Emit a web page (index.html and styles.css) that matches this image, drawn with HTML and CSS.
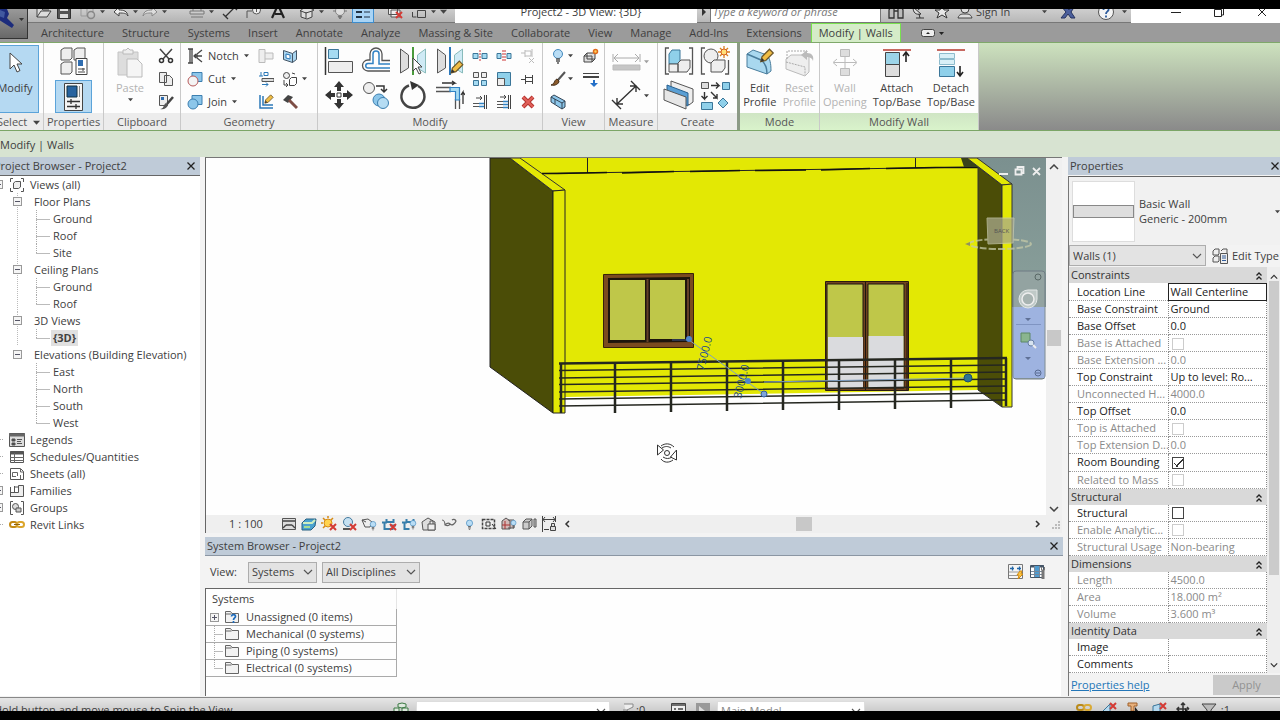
FILE: index.html
```html
<!DOCTYPE html>
<html lang="en">
<head>
<meta charset="utf-8">
<title>Project2 - 3D View: {3D}</title>
<link rel="stylesheet" href="styles.css">
</head>
<body>
<svg class="defs" aria-hidden="true">
  <symbol id="x-red" viewBox="0 0 8 8"><path d="M1 1l6 6M7 1L1 7" stroke="#d43a34" stroke-width="2" fill="none"/></symbol>
  <symbol id="bulb" viewBox="0 0 16 16"><circle cx="8" cy="6" r="4.500" fill="#b9ddf5" stroke="#4389bd"/><path d="M6 11h4M6 13h4M7 15h2" stroke="#555" stroke-width="1.300"/></symbol>
  <symbol id="pencil" viewBox="0 0 12 12"><path d="M1 11l1-4 6-6 3 3-6 6z" fill="#f0bd45" stroke="#6d5627"/><path d="M1 11l1-3 2 2z" fill="#333"/></symbol>
  <symbol id="drop" viewBox="0 0 6 6"><path d="M0 1.500h6L3 5z" fill="#444"/></symbol>
  <symbol id="folder" viewBox="0 0 16 14"><path d="M1.500 12.500v-11h5l1.500 2h6.500v9z" fill="#f2f2f2" stroke="#666"/><path d="M1.500 4h6" stroke="#666"/></symbol>
  <symbol id="chev" viewBox="0 0 10 6"><path d="M1 1l4 4 4-4" fill="none" stroke="#555" stroke-width="1.200"/></symbol>
  <symbol id="collapse" viewBox="0 0 8 10"><path d="M1.500 4.500L4 2l2.500 2.500M1.500 8.500L4 6l2.500 2.500" fill="none" stroke="#222" stroke-width="1.300"/></symbol>
  <symbol id="close" viewBox="0 0 8 8"><path d="M.5.5l7 7M7.500.5l-7 7" fill="none" stroke="#222" stroke-width="1.300"/></symbol>
</svg>
<div class="letterbox">
<div class="app">
<header class="top">
  <button class="logo" aria-label="Application menu"><svg width="36" height="29" viewBox="0 0 36 29"><path d="M6 0h9l2 5-2 4 7 7-2 3-8-5-5-3z" fill="#1c2c7c"/><path d="M8 1l5 2-1 6-5-2z" fill="#41599f"/><path d="M27 9h5l-2.500 3z" fill="#333"/></svg></button>
  <div class="top-rows">
    <div class="titlebar">
      <div class="qat">
        <button aria-label="Open"><svg width="16" height="16" viewBox="0 0 16 16"><path d="M1 13V4h4l2 2h6M1 13l4-6h10l-4 6z" fill="#ddd" stroke="#444"/></svg></button>
        <button aria-label="Save"><svg width="16" height="16" viewBox="0 0 16 16"><path d="M1.500 1.500h13v13h-13z" fill="#555" stroke="#333"/><path d="M4 2h8v5H4zM4 10h8v4H4z" fill="#ddd"/></svg></button>
        <button class="ml2" aria-label="Sync"><svg width="16" height="16" viewBox="0 0 16 16"><path d="M1 12V4h6v8zM7 2h6v7" fill="none" stroke="#999"/><circle cx="11" cy="11" r="3.500" fill="none" stroke="#888" stroke-width="1.500"/></svg></button>
        <svg class="dd" width="5" height="5"><use href="#drop"/></svg>
        <button class="ml2" aria-label="Undo"><svg width="16" height="16" viewBox="0 0 16 16"><path d="M1 8l5-5v3c5 0 8 1 9 6-2-3-4-3-9-3v3z" fill="#eee" stroke="#444"/></svg></button>
        <svg class="dd" width="5" height="5"><use href="#drop"/></svg>
        <button aria-label="Redo"><svg width="16" height="16" viewBox="0 0 16 16"><path d="M15 8l-5-5v3c-5 0-8 1-9 6 2-3 4-3 9-3v3z" fill="#ddd" stroke="#888"/></svg></button>
        <svg class="dd" width="5" height="5"><use href="#drop"/></svg>
        <button class="ml3" aria-label="Print"><svg width="16" height="16" viewBox="0 0 16 16"><path d="M4 7V1h8v6M1 7h14v3H1zM2 13h12" fill="#ccc" stroke="#777"/></svg></button>
        <svg class="dd" width="5" height="5"><use href="#drop"/></svg>
        <button class="ml2" aria-label="Measure"><svg width="16" height="16" viewBox="0 0 16 16"><path d="M3 13L13 3M1 10l5 5M10 1l5 5" stroke="#333" stroke-width="1.300" fill="none"/></svg></button>
        <button class="ml2" aria-label="Tag"><svg width="16" height="16" viewBox="0 0 16 16"><circle cx="10.500" cy="6" r="4" fill="#eee" stroke="#555"/><path d="M10.500 4v4M1 14v-7h5" stroke="#555" fill="none"/></svg></button>
        <button class="ml2" aria-label="Text"><svg width="16" height="16" viewBox="0 0 16 16"><path d="M2 14L8 1l6 13M5 10h7" fill="none" stroke="#222" stroke-width="2.200"/></svg></button>
        <button class="ml" aria-label="3D view"><svg width="16" height="16" viewBox="0 0 16 16"><path d="M1 7l6-5 8 4-2 1v6l-5 2-6-2V7z" fill="#ddd" stroke="#444"/><path d="M7 8v6M2 7l5 2 6-2" stroke="#444" fill="none"/></svg></button>
        <svg class="dd" width="5" height="5"><use href="#drop"/></svg>
        <button class="ml2" aria-label="Section"><svg width="16" height="16" viewBox="0 0 16 16"><circle cx="8" cy="7" r="4.500" fill="#ddd" stroke="#888"/><path d="M1 7h3M12 7h3M6 12h4l-2 3z" fill="#777" stroke="#777"/></svg></button>
        <button class="pressed" aria-label="Thin lines"><svg width="18" height="16" viewBox="0 0 18 16"><path d="M2 4h6M2 8h6M2 13h6" stroke="#234" stroke-width="2"/><path d="M10 4h6M10 8h6M10 13h6" stroke="#234"/></svg></button>
        <button class="ml" aria-label="Close hidden"><svg width="16" height="16" viewBox="0 0 16 16"><path d="M1.500 2.500h9v8h-9zM4 6h9v7H4z" fill="#eee" stroke="#555"/><use href="#x-red" x="8" y="7" width="8" height="8"/></svg></button>
        <button class="ml2" aria-label="Switch windows"><svg width="16" height="16" viewBox="0 0 16 16"><path d="M1 5V2h6M6.500 6.500h8v7h-8zM1.500 8v5h4" fill="none" stroke="#444"/></svg></button>
        <svg class="dd" width="5" height="5"><use href="#drop"/></svg>
        <svg class="dd" width="7" height="7"><use href="#drop"/></svg>
      </div>
      <div class="doc-title">Project2 - 3D View: {3D}</div>
      <div class="infocenter">
        <svg width="8" height="8" viewBox="0 0 8 8"><path d="M2 0l4 4-4 4z" fill="#333"/></svg>
        <input type="text" aria-label="Search" placeholder="Type a keyword or phrase">
        <svg width="16" height="16" viewBox="0 0 16 16"><path d="M1 14V6l2-4h3v12zM10 14V2h3l2 4v8zM6 7h4" fill="#bbb" stroke="#333" stroke-width="1.300"/></svg>
        <svg width="16" height="16" viewBox="0 0 16 16"><path d="M2 3c0 6 3 8 8 7zM5 14h8M8 10l1 4M7 6l5-4" fill="#ddd" stroke="#333"/></svg>
        <svg width="16" height="16" viewBox="0 0 16 16"><path d="M8 1l2 5h5l-4 3 2 5-5-3-5 3 2-5-4-3h5z" fill="#e8e8e8" stroke="#333"/></svg>
        <svg width="16" height="16" viewBox="0 0 16 16"><circle cx="8" cy="5" r="4" fill="#ddd" stroke="#444"/><path d="M1 14c1-4 4-4 7-4s6 0 7 4z" fill="#ddd" stroke="#444"/></svg>
        <span class="signin">Sign In</span>
        <svg width="5" height="5"><use href="#drop"/></svg>
        <svg class="exch" width="16" height="16" viewBox="0 0 16 16"><path d="M1 2h5l3 4 2-4h4l-4 6 4 6h-4l-3-4-3 4H1l5-6z" fill="#4b5f9d" stroke="#26335e"/></svg>
        <svg class="help" width="18" height="18" viewBox="0 0 18 18"><circle cx="9" cy="9" r="7.500" fill="#f4f4f4" stroke="#555"/><path d="M6.500 7c0-4 5.500-3 5 0-.3 1.500-2.500 1.500-2.500 4M9 12.500v2" fill="none" stroke="#2d5b9c" stroke-width="1.800"/></svg>
        <svg width="5" height="5"><use href="#drop"/></svg>
      </div>
      <div class="win">
        <button aria-label="Minimize"><svg width="10" height="10" viewBox="0 0 10 10"><path d="M0 5.500h10" stroke="#222"/></svg></button>
        <button aria-label="Restore"><svg width="10" height="10" viewBox="0 0 10 10"><path d="M.5 2.500h7v7h-7zM3 2V.5h6.500V8H8" fill="none" stroke="#222"/></svg></button>
        <button aria-label="Close"><svg width="10" height="10" viewBox="0 0 10 10"><path d="M1 1l8 8M9 1L1 9" stroke="#222"/></svg></button>
      </div>
    </div>
    <nav class="tabs">
      <button>Architecture</button><button>Structure</button><button>Systems</button><button>Insert</button><button>Annotate</button><button>Analyze</button><button>Massing &amp; Site</button><button>Collaborate</button><button>View</button><button>Manage</button><button>Add-Ins</button><button>Extensions</button><button class="active">Modify | Walls</button>
      <svg width="24" height="10" viewBox="0 0 24 10"><rect x=".5" y="1.500" width="13" height="7" rx="2" fill="#eee" stroke="#444"/><path d="M5 6l2-2 2 2z" fill="#222"/><path d="M18 4h5l-2.500 3z" fill="#222"/></svg>
    </nav>
  </div>
</header>

<section class="ribbon">
  <div class="panel p-select">
    <div class="body"><button class="big sel"><svg width="16" height="22" viewBox="0 0 16 22"><path d="M3 1v16l4-4 3 7 3-1.500-3-6.500h5z" fill="#fff" stroke="#444"/></svg><span>Modify</span></button></div>
    <div class="name">Select <svg width="7" height="7"><use href="#drop"/></svg></div>
  </div>
  <div class="panel p-props">
    <div class="body two">
      <button aria-label="Type properties"><svg width="30" height="30" viewBox="0 0 30 30"><path d="M2 3l3-2h8v10l-2 2H2zM15 3l3-2h8v10l-2 2h-9zM2 17l3-2h8v10l-2 2H2z" fill="#eee" stroke="#555"/><path d="M17 11.500h11v16H17z" fill="#fff" stroke="#444"/><path d="M19 13h5v6h-5z" fill="#2f6db0"/><path d="M19 22h7M19 25h7M24 21v3" stroke="#444"/></svg></button>
      <button class="sel" aria-label="Properties"><svg width="22" height="30" viewBox="0 0 22 30"><path d="M1.500 1.500h18v27h-18z" fill="#f4f4f4" stroke="#444"/><path d="M4 4h10v11H4z" fill="#27639f" stroke="#134"/><path d="M16.500 4v11" stroke="#888"/><path d="M4 19.500h13M4 24.500h13M8 17v5M13 22v5" stroke="#333" stroke-width="1.300"/></svg></button>
    </div>
    <div class="name">Properties</div>
  </div>
  <div class="panel p-clip">
    <div class="body">
      <button class="big off"><svg width="28" height="32" viewBox="0 0 28 32"><path d="M2 5h20v23H2z" fill="#ddd" stroke="#c4c4c4"/><path d="M7 7V3h3l2-2 2 2h3v4z" fill="#eee" stroke="#bbb"/><path d="M11 12h10l5 5v13H11z" fill="#f5f5f5" stroke="#bbb"/></svg><span>Paste</span><svg width="5" height="5"><use href="#drop"/></svg></button>
      <div class="three">
        <button aria-label="Cut"><svg width="16" height="16" viewBox="0 0 16 16"><path d="M2 1l9 10M14 1L5 11" stroke="#444" stroke-width="1.500"/><circle cx="3.500" cy="12.500" r="2" fill="none" stroke="#333" stroke-width="1.500"/><circle cx="12.500" cy="12.500" r="2" fill="none" stroke="#333" stroke-width="1.500"/></svg></button>
        <button aria-label="Copy"><svg width="16" height="16" viewBox="0 0 16 16"><path d="M1.500 1.500h7v10h-7zM6.500 4.500h5l3 3v7h-8z" fill="#eee" stroke="#555"/></svg></button>
        <button aria-label="Match type"><svg width="16" height="16" viewBox="0 0 16 16"><path d="M1.500 1.500h8v10h-8z" fill="#eee" stroke="#555"/><path d="M3 3h3v3H3z" fill="#2f6db0"/><path d="M15 3l-6 7" stroke="#444" stroke-width="2.500"/><path d="M2 15c4 0 3-4 6-6l2 2c-1 3-4 5-8 4z" fill="#555"/></svg></button>
      </div>
    </div>
    <div class="name">Clipboard</div>
  </div>
  <div class="panel p-geo">
    <div class="body">
      <div class="three labeled">
        <button><svg width="16" height="16" viewBox="0 0 16 16"><path d="M1 1h5M1 15h5M3 1v14M5 1v14M15 2l-5 4v4l5 4M15 8H7M9 6L7 8l2 2" fill="none" stroke="#444" stroke-width="1.300"/></svg>Notch<svg width="5" height="5"><use href="#drop"/></svg></button>
        <button><svg width="16" height="16" viewBox="0 0 16 16"><path d="M5 1.500h10v9H5z" fill="#8cc6ea" stroke="#3c7fb0"/><circle cx="6" cy="10" r="5" fill="#f4f4f4" stroke="#b65a5a"/></svg>Cut<svg width="5" height="5"><use href="#drop"/></svg></button>
        <button><svg width="16" height="16" viewBox="0 0 16 16"><path d="M5 1.500h10v9H5z" fill="#8cc6ea" stroke="#3c7fb0"/><circle cx="6" cy="10" r="5" fill="#8cc6ea" stroke="#3c7fb0"/></svg>Join<svg width="5" height="5"><use href="#drop"/></svg></button>
      </div>
      <div class="three">
        <button aria-label="Cope"><svg width="16" height="16" viewBox="0 0 16 16"><path d="M1 1.500h6v13H1zM7 5h8v6H7" fill="#eee" stroke="#bbb"/></svg></button>
        <button aria-label="Wall joins"><svg width="16" height="16" viewBox="0 0 16 16"><path d="M3 1v4M6 1.500h4v3H6zM1 5h4" stroke="#2b78b8" fill="none"/><path d="M4 7.500h12v3H4z" fill="#ddd" stroke="#555"/><path d="M4 13.500h6l-2-2m2 2l-2 2" stroke="#2b78b8" fill="none"/></svg></button>
        <button aria-label="Beam joins"><svg width="16" height="16" viewBox="0 0 16 16"><path d="M2 1v13h13M5 2v9h10" stroke="#2b78b8" stroke-width="1.500" fill="none"/><use href="#pencil" x="6" y="0" width="10" height="10"/></svg></button>
      </div>
      <div class="three">
        <button aria-label="Split face"><svg width="16" height="16" viewBox="0 0 16 16"><path d="M1.500 2.500l9 3v9l-9-3zM10.500 5.500l4-3v9l-4 3" fill="#a9d4ee" stroke="#456"/><path d="M4 6l4 1v4L4 10z" fill="#fff" stroke="#2b78b8"/></svg></button>
        <button aria-label="Demolish"><svg width="16" height="16" viewBox="0 0 16 16"><circle cx="4.500" cy="4.500" r="3" fill="#eee" stroke="#444"/><path d="M7.500 8.500l2-2h5v6l-2 2h-5zM2 9v5h4M4 12l2 2-2 2M10 2l3 1" fill="none" stroke="#444"/></svg></button>
        <button aria-label="Hammer"><svg width="16" height="16" viewBox="0 0 16 16"><path d="M1 6l5-5 5 2-5 6z" fill="#444"/><path d="M7 6l8 8" stroke="#7d4d45" stroke-width="3"/></svg></button>
      </div>
      <svg class="dd" width="5" height="5"><use href="#drop"/></svg>
    </div>
    <div class="name">Geometry</div>
  </div>
  <div class="panel p-modify">
    <div class="body">
      <div class="bigs">
        <button aria-label="Align"><svg width="30" height="30" viewBox="0 0 30 30"><path d="M1.500 1v28" stroke="#333" stroke-width="1.500"/><path d="M4.500 3.500h10v9h-10z" fill="#a6dbf2" stroke="#3b7699"/><path d="M4.500 15.500h24v11h-24z" fill="#eee" stroke="#555"/></svg></button>
        <button aria-label="Offset"><svg width="30" height="30" viewBox="0 0 30 30"><path d="M29 14.500h-8V8a6 6 0 0 0-12 0v6H7a5.500 5.500 0 0 0 0 11h22" fill="none" stroke="#555" stroke-width="1.300"/><path d="M29 18h-11V8a3 3 0 0 0-6 0v9.500H7a2 2 0 0 0 0 4.500h22" fill="none" stroke="#3182c4" stroke-width="1.500"/></svg></button>
        <button aria-label="Mirror pick axis"><svg width="30" height="30" viewBox="0 0 30 30"><path d="M2.500 3l8 6v13l-8 5z" fill="#ddd" stroke="#555"/><path d="M27.500 3l-8 6v13l8 5z" fill="#cfeaf5" stroke="#8bb"/><path d="M15 1v28" stroke="#4a9b3c" stroke-width="2"/><path d="M15 12v13l3-3 3 6 2-1-3-6h4z" fill="#fff" stroke="#444"/></svg></button>
        <button aria-label="Mirror draw axis"><svg width="30" height="30" viewBox="0 0 30 30"><path d="M2.500 3l8 6v13l-8 5z" fill="#ddd" stroke="#555"/><path d="M27.500 3l-8 6v13l8 5z" fill="#cfeaf5" stroke="#8bb"/><path d="M15 1v28" stroke="#2d78ba" stroke-width="2"/><use href="#pencil" x="15" y="14" width="14" height="14"/></svg></button>
        <button aria-label="Move"><svg width="30" height="30" viewBox="0 0 30 30"><path d="M15 1l5 6h-3v4h-4V7h-3zM15 29l5-6h-3v-4h-4v4h-3zM1 15l6-5v3h4v4H7v3zM29 15l-6-5v3h-4v4h4v3z" fill="#333"/><path d="M13 13h4v4h-4z" fill="none" stroke="#333"/></svg></button>
        <button aria-label="Copy element"><svg width="30" height="30" viewBox="0 0 30 30"><circle cx="8" cy="8" r="5.500" fill="#eee" stroke="#555"/><path d="M15 6h8v5M20 9l3 3 3-3" fill="none" stroke="#333" stroke-width="1.500"/><circle cx="18" cy="20" r="6" fill="#8cc6ea" stroke="#3c7fb0"/><circle cx="22" cy="23" r="5.500" fill="#b5dcf3" stroke="#3c7fb0"/></svg></button>
        <button aria-label="Rotate"><svg width="30" height="30" viewBox="0 0 30 30"><path d="M20 6a11.500 11.500 0 1 1-9-.5" fill="none" stroke="#444" stroke-width="2.500"/><path d="M12 1l9 4-7 5z" fill="#333"/></svg></button>
        <button aria-label="Trim corner"><svg width="30" height="30" viewBox="0 0 30 30"><path d="M1 7.500h15M1 11.500h15M20.500 19v10M24.500 19v10" stroke="#555" stroke-width="1.300"/><path d="M15 7.500h9.500V20h-4v-8.500H15z" fill="#a6dbf2" stroke="#3182c4" stroke-width="1.200"/><path d="M7 3h13l-3-2m3 2l-3 2M28 24V12l-2 3m2-3l2 3" fill="none" stroke="#333" stroke-width="1.300"/></svg></button>
      </div>
      <div class="smalls">
        <button aria-label="Split"><svg width="16" height="16" viewBox="0 0 16 16"><path d="M1 5.500h5v5H1zM10 5.500h5v5h-5z" fill="#a6dbf2" stroke="#3b7699"/><path d="M8 2v12" stroke="#c33" stroke-dasharray="2 1"/></svg></button>
        <button aria-label="Split gap"><svg width="16" height="16" viewBox="0 0 16 16"><path d="M1 5.500h4v5H1zM11 5.500h4v5h-4z" fill="#a6dbf2" stroke="#3b7699"/><path d="M7 2v12M9 2v12" stroke="#c33" stroke-dasharray="2 1"/></svg></button>
        <button aria-label="Unpin"><svg width="16" height="16" viewBox="0 0 16 16"><path d="M1 5h4M5 2v7M5 3h6v5H5M12 1v8M9 10l5 5M14 10l-5 5" stroke="#bbb" fill="none"/></svg></button>
        <button aria-label="Array"><svg width="16" height="16" viewBox="0 0 16 16"><path d="M1.500 1.500h5v5h-5zM9.500 1.500h5v5h-5z" fill="#eee" stroke="#555"/><path d="M1.500 9.500h5v5h-5zM9.500 9.500h5v5h-5z" fill="#a6dbf2" stroke="#3b7699"/></svg></button>
        <button aria-label="Scale"><svg width="16" height="16" viewBox="0 0 16 16"><path d="M1.500 1.500h13v13h-13z" fill="#8fd0ea" stroke="#3b7699"/><path d="M1.500 7.500h7v7h-7z" fill="#eee" stroke="#555"/></svg></button>
        <button aria-label="Pin"><svg width="16" height="16" viewBox="0 0 16 16"><path d="M1 8.500h4M5.500 4v9M6 6.500h6M6 10.500h6M12.500 4v9" stroke="#444" fill="none"/></svg></button>
        <button aria-label="Trim single"><svg width="16" height="16" viewBox="0 0 16 16"><path d="M12.500 1v14M14.500 1v14M4 4h6L8 2m2 2L8 6" stroke="#444" fill="none"/><path d="M1 9.500h6M1 12.500h6" stroke="#555"/><path d="M7 9.500h5M7 12.500h5" stroke="#3182c4" stroke-width="1.500"/></svg></button>
        <button aria-label="Trim multiple"><svg width="16" height="16" viewBox="0 0 16 16"><path d="M12.500 1v14M14.500 1v14M4 3h6L8 1m2 2L8 5" stroke="#444" fill="none"/><path d="M1 7.500h6M1 10.500h6M1 13.500h6" stroke="#555"/><path d="M7 7.500h5M7 10.500h5M7 13.500h5" stroke="#3182c4" stroke-width="1.500"/></svg></button>
        <button aria-label="Delete"><svg width="16" height="16" viewBox="0 0 16 16"><path d="M3 3l10 10M13 3L3 13" stroke="#b33530" stroke-width="4"/><path d="M3 3l10 10M13 3L3 13" stroke="#e2605a" stroke-width="2"/></svg></button>
      </div>
    </div>
    <div class="name">Modify</div>
  </div>
  <div class="panel p-view">
    <div class="body vgrid">
      <button aria-label="Hide in view"><svg width="16" height="16"><use href="#bulb"/></svg></button><svg width="5" height="5"><use href="#drop"/></svg>
      <button aria-label="Displace"><svg width="16" height="16" viewBox="0 0 16 16"><path d="M1 8l3-3h8v6l-3 3H1zM4 5v6h8M1 8h8v6" fill="#ddd" stroke="#444"/><circle cx="12.500" cy="3.500" r="2" fill="#ffd35a" stroke="#e06a1c" stroke-width="1.500"/></svg></button>
      <button aria-label="Override"><svg width="16" height="16" viewBox="0 0 16 16"><path d="M15 1L8 9" stroke="#555" stroke-width="2"/><path d="M1 14c4 1 8-1 8-4L7 8c-3 1-2 5-6 6z" fill="#8a5a2b" stroke="#442d18"/></svg></button><svg width="5" height="5"><use href="#drop"/></svg>
      <button aria-label="Linework"><svg width="16" height="16" viewBox="0 0 16 16"><path d="M0 2.500h16" stroke="#444"/><path d="M0 6h16" stroke="#444" stroke-width="2"/><path d="M12 9v3h3l-4 4-4-4h3V9z" fill="#2470c8"/></svg></button>
      <button aria-label="Selection box"><svg width="16" height="16" viewBox="0 0 16 16"><path d="M1 3l3-2 11 6v6l-3 2L1 8z" fill="#8cc6ea" stroke="#345"/><path d="M1 3l11 6v6M12 9l3-2M5 5v5" stroke="#345" fill="none"/></svg></button>
    </div>
    <div class="name">View</div>
  </div>
  <div class="panel p-measure">
    <div class="body mgrid">
      <button aria-label="Measure"><svg width="30" height="30" viewBox="0 0 30 30"><path d="M3 12h25M7 8l-4 4 4 4M24 8l4 4-4 4M2 8v8M29 8v8" fill="none" stroke="#aaa"/><path d="M2 19h27v5H2z" fill="#c6c6c6" stroke="#bbb"/></svg></button><svg class="faded" width="5" height="5"><use href="#drop"/></svg>
      <button aria-label="Dimension"><svg width="30" height="30" viewBox="0 0 30 30"><path d="M6 24L25 6M6 18v6h6M19 6h6v6M1 20l9 9M20 1l9 9" fill="none" stroke="#333" stroke-width="1.400"/></svg></button><svg width="5" height="5"><use href="#drop"/></svg>
    </div>
    <div class="name">Measure</div>
  </div>
  <div class="panel p-create">
    <div class="body cgrid">
      <button aria-label="Create assembly"><svg width="30" height="30" viewBox="0 0 30 30"><path d="M5 2H1.500v26H5M25 2h3.500v26H25" fill="none" stroke="#555" stroke-width="1.300"/><path d="M5 8l3-4h8v11l-2 3H5z" fill="#8fd0ea" stroke="#3b7699"/><path d="M5 18h9v8H5zM14 17l3-3h9v8l-3 4h-9z" fill="#eee" stroke="#555"/></svg></button>
      <button aria-label="Create parts"><svg width="30" height="30" viewBox="0 0 30 30"><path d="M5 2H1.500v26H5M28.500 14v14H25" fill="none" stroke="#555" stroke-width="1.300"/><circle cx="11" cy="10" r="7" fill="#eee" stroke="#555"/><path d="M11 17l3-3h11v8l-3 4H11z" fill="#eee" stroke="#555"/><path d="M24 0v12M18 6h12M20 2l8 8M28 2l-8 8" stroke="#d8801f" stroke-width="1.300"/><circle cx="24" cy="6" r="3" fill="#ffe07a" stroke="#d8601f"/></svg></button>
      <button aria-label="Create group"><svg width="32" height="30" viewBox="0 0 32 30"><path d="M8 1l22 8v13l-4 3L8 14z" fill="#eee" stroke="#555"/><path d="M4 5l21 8v13L4 16z" fill="#5a9fd4" stroke="#26608f"/><path d="M1 9l22 8v12L1 20z" fill="#e6e6e6" stroke="#555"/></svg></button>
      <button aria-label="Create similar"><svg width="30" height="30" viewBox="0 0 30 30"><path d="M1.500 2.500h7v6h-7z" fill="#ddd" stroke="#555"/><path d="M22.500 2.500h7v7h-7zM1.500 22.500h11v7h-11zM23 18l5 5-5 5-5-5z" fill="#8fd0ea" stroke="#3b7699"/><path d="M11 5.500h8l-3-3m3 3l-3 3M4.500 12v7l-3-3m3 3l3-3M11 12l6 6v-4m0 4h-4" fill="none" stroke="#333" stroke-width="1.400"/></svg></button>
    </div>
    <div class="name">Create</div>
  </div>
  <div class="panel ctx p-mode">
    <div class="body row">
      <button class="big"><svg width="30" height="32" viewBox="0 0 30 32"><path d="M2 7l6-4 14 5c3 4 4 8 4 16l-4 3L2 20z" fill="#a9d8ef" stroke="#4a7d9c"/><path d="M2 7l14 6c4 3 6 8 6 14" fill="none" stroke="#4a7d9c" stroke-width="1.500"/><use href="#pencil" x="14" y="1" width="16" height="15"/></svg><span>Edit<br>Profile</span></button>
      <button class="big off"><svg width="30" height="32" viewBox="0 0 30 32"><path d="M2 12l5-4h18v17l-4 4L2 22z" fill="#eee" stroke="#bbb"/><path d="M3 12V4h20v6M2 15l19 5v8" fill="none" stroke="#aaa" stroke-dasharray="2 1"/><path d="M17 8l6-5v3c5 0 7 3 6 8-1-3-3-4-6-4v3z" fill="#bbb"/></svg><span>Reset<br>Profile</span></button>
    </div>
    <div class="name">Mode</div>
  </div>
  <div class="panel ctx p-wall">
    <div class="body row">
      <button class="big off"><svg width="26" height="32" viewBox="0 0 26 32"><path d="M8.500 2.500h9v7h-9zM8.500 21.500h9v7h-9z" fill="#ddd" stroke="#bbb"/><path d="M13 10v11M2 15.500h22M5 12l-4 3.500L5 19M21 12l4 3.500-4 3.500" fill="none" stroke="#bbb"/></svg><span>Wall<br>Opening</span></button>
      <button class="big"><svg width="30" height="32" viewBox="0 0 30 32"><path d="M1 3h28" stroke="#c76961" stroke-width="2"/><path d="M3.500 5.500h14v12h-14z" fill="#9cd4e8" stroke="#444"/><path d="M3.500 17.500h14v12h-14z" fill="#ddd" stroke="#444"/><path d="M24 15V5m-3 4l3-4 3 4" fill="none" stroke="#222" stroke-width="1.600"/></svg><span>Attach<br>Top/Base</span></button>
      <button class="big"><svg width="30" height="32" viewBox="0 0 30 32"><path d="M1 3h28" stroke="#c76961" stroke-width="2"/><path d="M3.500 6.500h15v5h-15zM3.500 12.500h15v5h-15z" fill="#d9f0f7" stroke="#8dbccd"/><path d="M3.500 19.500h15v10h-15z" fill="#8fd0ea" stroke="#3b7699"/><path d="M24 19v10m-3-4l3 4 3-4" fill="none" stroke="#222" stroke-width="1.600"/></svg><span>Detach<br>Top/Base</span></button>
    </div>
    <div class="name">Modify Wall</div>
  </div>
</section>
<div class="options">Modify | Walls</div>

<main class="work">
  <aside class="browser">
    <h2 class="cap">Project Browser - Project2<button aria-label="Close"><svg width="8" height="8"><use href="#close"/></svg></button></h2>
    <div class="treebox">
    <ul class="tree">
      <li><div class="root"><i class="pm"></i><svg width="16" height="14" viewBox="0 0 16 14"><path d="M4 .5H1.500V4M12 .5h2.500V4M4 13.500H1.500V10M12 13.500h2.500V10" fill="none" stroke="#555"/><path d="M4.500 5l2-1.500h5V9l-2 1.500h-5z" fill="#eee" stroke="#555"/></svg>Views (all)</div>
        <ul class="groups">
          <li><div class="grp"><i class="pm"></i>Floor Plans</div><ul class="leaves"><li>Ground</li><li>Roof</li><li>Site</li></ul></li>
          <li><div class="grp"><i class="pm"></i>Ceiling Plans</div><ul class="leaves"><li>Ground</li><li>Roof</li></ul></li>
          <li><div class="grp"><i class="pm"></i>3D Views</div><ul class="leaves"><li><b>{3D}</b></li></ul></li>
          <li><div class="grp"><i class="pm"></i>Elevations (Building Elevation)</div><ul class="leaves"><li>East</li><li>North</li><li>South</li><li>West</li></ul></li>
        </ul></li>
      <li><div class="root"><i class="no"></i><svg width="16" height="14" viewBox="0 0 16 14"><path d="M.5.5h15v13H.5z" fill="#ddd" stroke="#555"/><path d="M0 2h16" stroke="#666" stroke-width="3"/><path d="M3 6h3v2H3zM3 10h3v2H3zM8 6.500h5M8 8.500h4M8 10.500h5" fill="#444" stroke="#555"/></svg>Legends</div></li>
      <li><div class="root"><i class="no"></i><svg width="16" height="14" viewBox="0 0 16 14"><path d="M1.500 1.500h13v11h-13z" fill="#fff" stroke="#555"/><path d="M1 3h14" stroke="#555" stroke-width="3"/><path d="M1 7.500h14M1 10.500h14M5.500 3v10" stroke="#666"/></svg>Schedules/Quantities</div></li>
      <li><div class="root"><i class="no"></i><svg width="16" height="14" viewBox="0 0 16 14"><path d="M1.500 1.500h10l3 3v8h-13z" fill="#fff" stroke="#555"/><path d="M3.500 10V5.500h5V9M4 9.500h3M11.500 2v3h3M11.500 8v4" fill="none" stroke="#666"/></svg>Sheets (all)</div></li>
      <li><div class="root"><i class="pm plus"></i><svg width="16" height="14" viewBox="0 0 16 14"><path d="M1.500 13V3M1.500 12.500h13V1.500h-5v7h-8M5.500 2v6M9 3h-3" fill="#eee" stroke="#555"/></svg>Families</div></li>
      <li><div class="root"><i class="pm plus"></i><svg width="16" height="14" viewBox="0 0 16 14"><path d="M4 .5H1.500v13H4M12 .5h2.500v13H12" fill="none" stroke="#555"/><circle cx="6.500" cy="5.500" r="3" fill="#ddd" stroke="#555"/><path d="M7 7h5v4H7z" fill="#ccc" stroke="#555"/></svg>Groups</div></li>
      <li><div class="root"><i class="no"></i><svg width="16" height="14" viewBox="0 0 16 14"><rect x="1" y="4" width="7" height="5" rx="2.500" fill="none" stroke="#c48a12" stroke-width="2"/><rect x="8" y="4" width="7" height="5" rx="2.500" fill="none" stroke="#dba52c" stroke-width="2"/><path d="M5 6.500h6" stroke="#8f6410"/></svg>Revit Links</div></li>
    </ul>
    </div>
  </aside>

  <div class="center">
    <section class="viewport">
      <div class="canvas">
        <svg class="scene" viewBox="206 158 840 370" preserveAspectRatio="xMinYMin slice">
          <defs><linearGradient id="sky" x1="0" y1="0" x2="0" y2="1"><stop offset="0" stop-color="#7b908f"/><stop offset="1" stop-color="#8aa09b"/></linearGradient></defs>
          <path d="M206 158h840v400H206z" fill="#fefefe"/>
          <path d="M972 158h74v149h-74z" fill="url(#sky)"/>
          <path d="M510 158h452l16 9v223L565 397V190z" fill="#e3e804"/>
          <path d="M490 158h20l43 33v222l-63-46z" fill="#4b4d07" stroke="#222"/>
          <path d="M510 158h10l45 32-12 1z" fill="#e3e804" stroke="#333"/>
          <path d="M553 191l12-1v223h-12z" fill="#e3e804" stroke="#222"/>
          <path d="M542 173.500L978 167M587.500 158v15M915.500 158v10" stroke="#222" fill="none"/>
          <path d="M542 173.500h15l50-1M622 173l52-1.500M690 171.500l50-1M755 170.500l51-.5M821 170l49-1.500M886 168.500l50-1M936 167.500h42" stroke="#111" stroke-width="1.500" fill="none"/>
          <path d="M961 158h8l9 9h-14z" fill="#39431a"/>
          <path d="M978 167l24 18v222l-24-17z" fill="#4b4d07" stroke="#333"/>
          <path d="M967 158h10l35 26-10 1z" fill="#e3e804" stroke="#333"/>
          <path d="M1002 185l10-1v223h-10z" fill="#e3e804" stroke="#333"/>
          <path d="M603.500 274.500l90-1v74h-90z" fill="#7b4b1f" stroke="#372109"/>
          <path d="M608 278l82-1v65l-82 1z" fill="#1d150c"/>
          <path d="M610 280h35v60h-35zM650 280h35v59h-35z" fill="#bfc749"/>
          <path d="M647.500 279v63M688 279v62" stroke="#634028" stroke-width="2"/>
          <path d="M825.500 281.500h83v109h-83z" fill="#70431f" stroke="#2a1b0f"/>
          <path d="M827 284h36v104h-36zM868 284h36v104h-36z" fill="#bfc749" stroke="#1c1710"/>
          <path d="M828 337h35v51h-35zM868.500 336h35v52h-35z" fill="#dadbde"/>
          <path d="M865.500 282v108M907 283v107" stroke="#1c1710"/>
          <g stroke="#252720" fill="none">
            <path d="M559 363.500L1007 358" stroke-width="2.500"/>
            <path d="M559 370.500L1007 365M559 378L1007 372M559 384.500L1007 379M559 392L1007 386M559 399L1007 393M559 406L1007 400" stroke-width="1.600"/>
            <path d="M561 363v50M615 363v50M671 362v50M727 361v50M783 361v49M839 360v50M895 360v49M951 359v49M1006 358v48" stroke-width="2.500"/>
          </g>
          <path d="M689 340L764 394M764 382L968 378" stroke="#7e9fc5" fill="none"/>
          <path d="M672 340h17" stroke="#3e5a8c"/>
          <circle cx="689" cy="339" r="3" fill="#4e86cd"/><circle cx="748" cy="381" r="3" fill="#4e86cd"/><circle cx="764" cy="394" r="3" fill="#7fa5d9" stroke="#335e9b"/><circle cx="968" cy="378" r="4" fill="#2d7393" stroke="#1c4e72"/>
          <text class="dim" transform="translate(704 371) rotate(-76)">7500.0</text>
          <text class="dim" transform="translate(741 399) rotate(-76)">3000.0</text>
          <g fill="none" stroke="#333"><circle cx="667" cy="453" r="2.500"/><path d="M661 446c4-3 9-3 13 1M673 460c-4 3-9 3-12-1M662 448c3-2 6-2 9 0M672 457c-3 2-6 2-9 0M657.500 445v10l6-5zM676.500 460v-10l-6 7z"/></g>
          <g opacity=".75"><ellipse cx="1000" cy="244" rx="31" ry="5" fill="none" stroke="#c5c9a8" stroke-width="2" stroke-dasharray="7 2"/><path d="M987 218h27l-1 25-25 1z" fill="#a9aa8d" stroke="#c9cbb0"/><path d="M965 244l5-2v4z" fill="#777"/></g>
          <text class="cube" x="994" y="233">BACK</text>
          <g stroke="#eee" fill="none"><path d="M999 174h9" stroke-width="2"/><path d="M1015.500 169.500h6v5h-6zM1017.500 169v-2h6v6h-2M1033 168l7 7M1040 168l-7 7" stroke-width="1.800"/></g>
          <rect x="1013" y="271" width="32" height="108" rx="3" fill="#93a3a1" stroke="#6f7b84"/>
          <path d="M1013.500 307h31v71h-31z" fill="#9eb3e0"/>
          <circle cx="1038" cy="277" r="3" fill="none" stroke="#596866"/><circle cx="1038" cy="373" r="3" fill="none" stroke="#596b90"/><path d="M1036 373h4" stroke="#596b90"/>
          <path d="M1028 290h9v9a9 9 0 1 1-9-9z" fill="#bfc9c7" stroke="#e3e8e7"/><circle cx="1028" cy="299" r="6" fill="#a7b3b1" stroke="#eee" stroke-width="1.500"/>
          <path d="M1025 318h6l-3 3zM1025 357h6l-3 3z" fill="#5f7197"/><path d="M1016 324.500h25" stroke="#7f94c2"/><path d="M1021 333h9v9h-9z" fill="#8ab58f" stroke="#5c8864"/><circle cx="1031" cy="343" r="3" fill="#d8e4f0" stroke="#677ea3"/><path d="M1033 345l3 3" stroke="#eee" stroke-width="2"/>
        </svg>
        <div class="vscroll"><svg width="10" height="6" viewBox="0 0 10 6"><path d="M1 5l4-4 4 4" fill="none" stroke="#444" stroke-width="1.500"/></svg><i></i><svg width="10" height="6" viewBox="0 0 10 6"><path d="M1 1l4 4 4-4" fill="none" stroke="#444" stroke-width="1.500"/></svg></div>
      </div>
      <div class="viewbar">
        <span class="scale">1 : 100</span>
        <div class="vicons">
          <svg viewBox="0 0 16 16"><path d="M1.500 2.500h13v11h-13z" fill="#ddd" stroke="#555"/><path d="M2 5h12M5 9h6M2 12l3-3M14 12l-3-3" stroke="#444" stroke-width="1.400"/></svg>
          <svg viewBox="0 0 16 16"><path d="M1 7l4-4h10l-1 7-4 4H1z" fill="#4ba2cf" stroke="#276082"/><path d="M2 7h9l3-3" fill="none" stroke="#cdeec1" stroke-width="2"/><path d="M3 11h6" stroke="#a5dc92" stroke-width="2"/></svg>
          <svg viewBox="0 0 16 16"><circle cx="7" cy="7" r="4" fill="#ffd34f" stroke="#d68b16"/><path d="M7 0v2M0 7h2M2 2l2 2M12 2l-2 2M2 12l2-2" stroke="#d68b16" stroke-width="1.500"/><use href="#x-red" x="8" y="7" width="8" height="8"/></svg>
          <svg viewBox="0 0 16 16"><circle cx="7" cy="6" r="4.500" fill="#c6e1f2" stroke="#447a9f"/><path d="M2 13h7" stroke="#555" stroke-width="2"/><use href="#x-red" x="8" y="7" width="8" height="8"/></svg>
          <svg viewBox="0 0 16 16"><path d="M1 4l3 7h5l2-5-4-3zM1 4l4 2" fill="#eee" stroke="#555"/><use href="#bulb" x="7" y="4" width="10" height="11"/></svg>
          <svg viewBox="0 0 16 16"><path d="M3.500 6v7h9M1 6.500h5M5.500 3v3h7V3M9 9.500h6" fill="none" stroke="#377eab" stroke-width="2"/><use href="#x-red" x="8" y="7" width="8" height="8"/></svg>
          <svg viewBox="0 0 16 16"><path d="M3.500 6v7h5M1 6.500h5M5.500 3v3h7V3" fill="none" stroke="#377eab" stroke-width="2"/><use href="#bulb" x="7" y="3" width="10" height="11"/></svg>
          <svg viewBox="0 0 16 16"><path d="M1 6l6-4 7 4v8H2z" fill="#ddd" stroke="#555"/><path d="M7 8h7v6H7zM9 8V5h3v3" fill="#eee" stroke="#555"/></svg>
          <svg viewBox="0 0 16 16"><path d="M1 4c2 0 3 3 3 5 2 1 4 1 5-1 2 2 5 0 6-3-1-2-3-2-4-1M4 9c2-2 4-2 5-1" fill="none" stroke="#666" stroke-width="1.200"/></svg>
          <svg viewBox="0 0 16 16"><use href="#bulb" x="3" y="3" width="11" height="11"/></svg>
          <svg viewBox="0 0 16 16"><path d="M1.500 3.500h12v9h-12z" fill="#eee" stroke="#444" stroke-width="1.500" stroke-dasharray="3 1"/><path d="M5 6h4v4H5zM11 8l4 5" fill="none" stroke="#333"/></svg>
          <svg viewBox="0 0 16 16"><path d="M1 5l4-3 4 3v8H1zM7 4h6v8H7" fill="#d3b9b7" stroke="#555"/><path d="M1 9h8M4 5v8" stroke="#a33"/><use href="#bulb" x="8" y="3" width="9" height="10"/></svg>
          <svg viewBox="0 0 16 16"><path d="M2 6l3-3h6v7l-3 3H2zM2 6h6v7M8 6l3-3M13 3v8h2V3z" fill="#ccc" stroke="#555"/></svg>
          <svg viewBox="0 0 16 16"><path d="M1.500 0v16M14.500 0v6M2 3.500h12M4 1L2 3.500 4 6M12 1l2 2.500L12 6M3 13.500h5" fill="none" stroke="#444"/><path d="M9.500 10.500h5v4h-5zM10.500 10V7.500h3V10" fill="#ddd" stroke="#444"/></svg>
          <svg viewBox="0 0 16 16"><path d="M8 5L5 8l3 3" fill="none" stroke="#333" stroke-width="1.500"/></svg>
        </div>
        <div class="hscroll"><i></i></div>
        <svg class="end" viewBox="0 0 16 16"><path d="M6 5l3 3-3 3" fill="none" stroke="#333" stroke-width="1.500"/></svg>
        <svg class="end" viewBox="0 0 16 16"><path d="M6 13h2v-2H6zM9 13h2v-2H9zM12 13h2v-2h-2zM9 10h2V8H9zM12 10h2V8h-2zM12 7h2V5h-2z" fill="#bbb"/></svg>
      </div>
    </section>
    <section class="sysbrowser">
      <h2 class="cap">System Browser - Project2<button aria-label="Close"><svg width="8" height="8"><use href="#close"/></svg></button></h2>
      <div class="sysbar">
        <label for="v1">View:</label>
        <span class="combo c1"><select id="v1"><option>Systems</option></select><svg width="10" height="6"><use href="#chev"/></svg></span>
        <span class="combo c2"><select aria-label="Discipline"><option>All Disciplines</option></select><svg width="10" height="6"><use href="#chev"/></svg></span>
        <span class="grow"></span>
        <button aria-label="Autofit columns"><svg width="16" height="16" viewBox="0 0 16 16"><path d="M.5.5h14v14H.5z" fill="#f5f5f5" stroke="#777"/><path d="M1 8h13M1 11.500h9" stroke="#999"/><path d="M2 4.500h4M4.500 2.500v4M9 4.500h4M11.500 2.500v4" stroke="#2367a8" stroke-width="1.300"/><path d="M12 7l-3 4h2l-1 4 5-5h-2l1-3z" fill="#ffc741" stroke="#d08b14"/></svg></button>
        <button aria-label="Column settings"><svg width="16" height="16" viewBox="0 0 16 16"><path d="M.5 1.500h13v12H.5z" fill="#fff" stroke="#456"/><path d="M1 2.500h13" stroke="#456" stroke-width="2"/><path d="M5 2h4v11H5z" fill="#4e9bd0"/><path d="M1 7.500h13M1 10.500h13M4.500 2v11M9.500 2v11" stroke="#789"/><path d="M13 6v9" fill="none" stroke="#777" stroke-width="3"/><path d="M11.500 3v3h3V3" fill="none" stroke="#777"/></svg></button>
      </div>
      <div class="syslist">
        <table>
          <thead><tr><th>Systems</th></tr></thead>
          <tbody>
            <tr><td><div class="sysrow first"><i class="pm plus"></i><svg width="16" height="14" viewBox="0 0 16 14"><use href="#folder"/><path d="M7.500 6.500c0-2.500 4-2.500 4 0 0 1.500-2 1.500-2 3.500M9.500 11v2" fill="none" stroke="#1d6bbb" stroke-width="1.700"/></svg>Unassigned (0 items)</div></td></tr>
            <tr><td><div class="sysrow"><i></i><svg width="16" height="14"><use href="#folder"/></svg>Mechanical (0 systems)</div></td></tr>
            <tr><td><div class="sysrow"><i></i><svg width="16" height="14"><use href="#folder"/></svg>Piping (0 systems)</div></td></tr>
            <tr><td><div class="sysrow last"><i></i><svg width="16" height="14"><use href="#folder"/></svg>Electrical (0 systems)</div></td></tr>
          </tbody>
        </table>
      </div>
    </section>
  </div>

  <aside class="props">
    <h2 class="cap">Properties<button aria-label="Close"><svg width="8" height="8"><use href="#close"/></svg></button></h2>
    <div class="propbox">
      <div class="type"><div class="thumb"><i></i></div><div>Basic Wall<br>Generic - 200mm</div><svg width="5" height="5"><use href="#drop"/></svg></div>
      <div class="filter">
        <span class="combo c3"><select aria-label="Element filter"><option>Walls (1)</option></select><svg width="10" height="6"><use href="#chev"/></svg></span>
        <button><svg width="17" height="16" viewBox="0 0 17 16"><path d="M1 3l2-2h4v5L6 7H1zM9 3l2-2h4v4M1 10l2-2h4v5l-1 1H1zM8.500 5.500h7v10h-7z" fill="#eee" stroke="#555"/><path d="M10 8h4M10 10h4M10 12.500h4" stroke="#2f5b9a"/></svg>Edit Type</button>
      </div>
      <div class="sheet">
        <table>
          <colgroup><col class="key"><col></colgroup>
          <tr class="h"><th colspan="2"><span>Constraints</span><svg width="8" height="10"><use href="#collapse"/></svg></th></tr>
          <tr><td>Location Line</td><td class="edit">Wall Centerline</td></tr>
          <tr><td>Base Constraint</td><td>Ground</td></tr>
          <tr><td>Base Offset</td><td>0.0</td></tr>
          <tr class="ro"><td><label for="k1">Base is Attached</label></td><td><input id="k1" type="checkbox" disabled></td></tr>
          <tr class="ro"><td>Base Extension ...</td><td>0.0</td></tr>
          <tr><td>Top Constraint</td><td>Up to level: Ro...</td></tr>
          <tr class="ro"><td>Unconnected H...</td><td>4000.0</td></tr>
          <tr><td>Top Offset</td><td>0.0</td></tr>
          <tr class="ro"><td><label for="k2">Top is Attached</label></td><td><input id="k2" type="checkbox" disabled></td></tr>
          <tr class="ro"><td>Top Extension D...</td><td>0.0</td></tr>
          <tr><td><label for="k3">Room Bounding</label></td><td><input id="k3" type="checkbox" checked></td></tr>
          <tr class="ro"><td><label for="k4">Related to Mass</label></td><td><input id="k4" type="checkbox" disabled></td></tr>
          <tr class="h"><th colspan="2"><span>Structural</span><svg width="8" height="10"><use href="#collapse"/></svg></th></tr>
          <tr><td><label for="k5">Structural</label></td><td><input id="k5" type="checkbox"></td></tr>
          <tr class="ro"><td><label for="k6">Enable Analytic...</label></td><td><input id="k6" type="checkbox" disabled></td></tr>
          <tr class="ro"><td>Structural Usage</td><td>Non-bearing</td></tr>
          <tr class="h"><th colspan="2"><span>Dimensions</span><svg width="8" height="10"><use href="#collapse"/></svg></th></tr>
          <tr class="ro"><td>Length</td><td>4500.0</td></tr>
          <tr class="ro"><td>Area</td><td>18.000 m²</td></tr>
          <tr class="ro"><td>Volume</td><td>3.600 m³</td></tr>
          <tr class="h"><th colspan="2"><span>Identity Data</span><svg width="8" height="10"><use href="#collapse"/></svg></th></tr>
          <tr><td>Image</td><td></td></tr>
          <tr><td>Comments</td><td></td></tr>
        </table>
        <div class="pscroll"><svg width="8" height="8" viewBox="0 0 10 6"><path d="M1 5l4-4 4 4" fill="none" stroke="#333" stroke-width="1.500"/></svg><i></i><svg width="8" height="8" viewBox="0 0 10 6"><path d="M1 1l4 4 4-4" fill="none" stroke="#333" stroke-width="1.500"/></svg></div>
      </div>
      <div class="foot"><a href="#help">Properties help</a><button disabled>Apply</button></div>
    </div>
  </aside>
</main>

<footer class="status">
  <span class="msg">Hold button and move mouse to Spin the View</span>
  <svg class="ws" width="16" height="16" viewBox="0 0 16 16"><path d="M5 5V2l4-1 4 1v3l-4 1zM1 6h5v5H1zM9 6h6v5H9z" fill="#dfe9df" stroke="#3d7a45"/></svg>
  <span class="combo s1"><select aria-label="Workset"><option></option></select><svg width="10" height="6"><use href="#chev"/></svg></span>
  <span class="req"><svg width="14" height="14" viewBox="0 0 14 14"><path d="M2 2h9v3L5 8v5M1 8h5" fill="#eee" stroke="#888"/></svg>:0</span>
  <svg class="op" width="17" height="16" viewBox="0 0 17 16"><path d="M1.500 1.500h14v13h-14z" fill="#eee" stroke="#444"/><path d="M1 3h15M4 7h2M8 7h5M4 10h2M8 10h5" stroke="#444" stroke-width="1.500"/></svg>
  <svg class="ex" width="14" height="16" viewBox="0 0 14 16"><path d="M0 1h14v15H0z" fill="#999"/><path d="M3 4l6 5-6 1z" fill="#ddd"/></svg>
  <span class="combo s2"><select aria-label="Design option"><option>Main Model</option></select><svg width="10" height="6"><use href="#chev"/></svg></span>
  <span class="sicons">
    <svg viewBox="0 0 16 16"><rect x="1" y="3" width="7" height="5" rx="2.500" fill="none" stroke="#b98a1a" stroke-width="2"/><rect x="8" y="3" width="7" height="5" rx="2.500" fill="none" stroke="#d9aa35" stroke-width="2"/></svg>
    <svg viewBox="0 0 16 16"><path d="M1 10L9 2v8z" fill="#b5d9ef" stroke="#3b7699"/><use href="#x-red" x="8" y="0" width="8" height="8"/></svg>
    <svg viewBox="0 0 16 16"><path d="M2 1h9v3H8v5H5V4H2z" fill="#e7b07c" stroke="#a0602b"/><path d="M9 5v8l4-3z" fill="#222"/></svg>
    <svg viewBox="0 0 16 16"><path d="M2 4l7-2v9l-7 1z" fill="#b5d9ef" stroke="#3b7699"/><use href="#x-red" x="8" y="0" width="8" height="8"/></svg>
    <svg viewBox="0 0 16 16"><path d="M7 1v12M1 7h12M5 3l2-2 2 2M3 5L1 7l2 2M11 5l2 2" fill="none" stroke="#333" stroke-width="1.500"/><path d="M9 6v9l5-4z" fill="#222"/></svg>
    <svg viewBox="0 0 16 16"><path d="M1 2h14L10 8v6H6V8z" fill="#bbb" stroke="#444"/></svg>
    <span>:1</span>
  </span>
</footer>
</div>
</div>
</body>
</html>
```
FILE: styles.css
```css
* { box-sizing: border-box; }
body { margin: 0; background: #000; color: #404040; font: 11px/14px "Open Sans", "Noto Sans", sans-serif; overflow: hidden; }
button { font: inherit; color: inherit; background: none; border: 0; padding: 0; margin: 0; white-space: nowrap; }
select, input { font: inherit; color: inherit; margin: 0; }
svg { display: block; flex: none; }
.defs { width: 0; height: 0; position: absolute; }
.letterbox { height: 100vh; padding: 9px 0; overflow: hidden; }
.app { height: 100%; margin-left: -8px; display: flex; flex-direction: column; background: #efefef; overflow: hidden; }
h2.cap { margin: 0; font: inherit; flex: none; height: 18px; line-height: 18px; background: #bfcbd8; display: flex; justify-content: space-between; align-items: center; padding: 0 5px 0 2px; white-space: nowrap; }

.top { display: flex; flex: none; height: 33px; background: #9b9b9b; }
.logo { width: 36px; height: 30px; border-right: 1px solid #333; border-bottom: 1px solid #333; background: linear-gradient(#999, #686868); overflow: hidden; }
.top-rows { flex: 1; min-width: 0; }
.titlebar { height: 14px; overflow: hidden; display: flex; align-items: flex-end; background: #fff; }
.titlebar > div { height: 22px; flex: none; display: flex; align-items: center; }
.qat { width: 427px; gap: 4px; padding-left: 8px; background: linear-gradient(#dcdcdc, #b4b4b4); border-bottom: 1px solid #777; }
.qat .ml { margin-left: 9px; }
.qat .ml2 { margin-left: 4px; }
.qat .ml3 { margin-left: 18px; }
.qat .pressed { background: #a9d4f5; border: 1px solid #3d8ccc; height: 22px; padding: 0 1px; }
.titlebar .doc-title { flex: 1; justify-content: center; padding-left: 10px; white-space: nowrap; }
.infocenter { width: 434px; gap: 7px; padding-left: 3px; background: linear-gradient(#dcdcdc, #b8b8b8); border-bottom: 1px solid #777; }
.infocenter input { width: 171px; height: 22px; margin-left: -5px; border: 1px solid #777; padding: 0 2px; font-style: italic; background: #fff; }
.infocenter input::placeholder { color: #777; }
.signin { margin-left: -4px; flex: 1; }
.exch { margin-left: 6px; }
.help { margin-left: 14px; }
.infocenter > svg:last-child { margin-right: 4px; }
.win { width: 149px; padding-left: 40px; gap: 33px; }
.tabs { display: flex; height: 19px; align-items: center; padding-left: 4px; }
.tabs button { height: 19px; padding: 1px 9px 0; }
.tabs .active { background: #d5ecc8; border: 1px solid #79e04f; border-bottom: 0; padding: 0 7px; }
.tabs svg { margin-left: 20px; }

.ribbon { flex: none; display: flex; height: 89px; border-top: 1px solid #7fa86a; border-bottom: 1px solid #7ba566; background: linear-gradient(#cde2be, #8a8a8a); }
.panel { flex: none; display: flex; flex-direction: column; border-right: 1px solid #c9c9c9; background: #fdfdfd; }
.panel .body { flex: 1; display: flex; min-height: 0; }
.panel .name { height: 17px; line-height: 17px; text-align: center; background: #ececec; color: #555; white-space: nowrap; }
.panel .name svg { display: inline-block; margin-left: 3px; }
.panel button { display: flex; align-items: center; justify-content: center; }
.panel .sel { background: #b5d9f2; outline: 1px solid #5ba3d9; }
.panel .big { flex-direction: column; justify-content: flex-start; padding-top: 4px; gap: 2px; line-height: 14px; }
.panel .off { color: #b3b3b3; }
.p-select { width: 52px; }
.p-select .big { width: 46px; height: 66px; margin-top: 3px; padding-top: 6px; gap: 7px; }
.p-select .name { padding-left: 2px; }
.p-props { width: 60px; }
.two { flex-direction: column; align-items: center; gap: 4px; padding-top: 3px; }
.two button { width: 35px; height: 31px; }
.p-clip { width: 77px; }
.p-clip .big { width: 52px; }
.three { display: grid; grid-template-rows: repeat(3, 23px); align-content: start; padding-top: 1px; width: 24px; }
.p-geo { width: 137px; }
.p-geo .dd { align-self: center; }
.p-clip .three { margin-left: -2px; }
.three.labeled { width: 73px; padding-left: 6px; justify-items: start; }
.labeled button { gap: 5px; }
.p-modify { width: 225px; }
.bigs { display: grid; grid-template: repeat(2, 34px) / repeat(4, 37px); align-content: start; padding: 1px 0 0 2px; }
.smalls { display: grid; grid-template: repeat(3, 23px) / repeat(3, 24px); align-content: start; padding-top: 1px; }
.p-view { width: 62px; }
.panel .vgrid { display: grid; grid-template: repeat(3, 23px) / 20px 12px 22px; align-content: start; align-items: center; padding: 1px 0 0 5px; }
.p-measure { width: 53px; }
.panel .mgrid { display: grid; grid-template: repeat(2, 34px) / 36px 12px; align-content: start; align-items: center; padding: 1px 0 0 3px; }
.faded { opacity: .5; }
.p-create { width: 82px; border-right: 3px solid #8c9a86; }
.panel .cgrid { display: grid; grid-template: repeat(2, 34px) / 36px 36px; align-content: start; padding: 1px 0 0 3px; }
.ctx .name { background: linear-gradient(#cfe5c4, #d9f3cb); }
.p-mode { width: 80px; }
.p-wall { width: 159px; }
.row { justify-content: space-around; }
.row .big span { text-align: center; }
.options { flex: none; height: 26px; padding: 7px 0 0 8px; background: #d7e3d1; }

.work { flex: 1; min-height: 0; display: grid; grid-template-columns: 208px minmax(0, 1fr) 212px; column-gap: 5px; padding-bottom: 1px; background: #f3f3f3; }
.browser, .center, .props { display: flex; flex-direction: column; min-height: 0; min-width: 0; }
.treebox { flex: 1; border-top: 1px solid #666; background: #fff; min-height: 0; }
.tree, .tree ul { list-style: none; margin: 0; padding: 0; }
.root, .grp, .leaves li { height: 17px; line-height: 17px; display: flex; align-items: center; white-space: nowrap; }
.root { padding-left: 2px; }
.root svg { margin: 0 5px 0 6px; }
.pm { width: 9px; height: 9px; border: 1px solid #999; background: linear-gradient(#556, #556) center / 5px 1px no-repeat, #f5f5f5; flex: none; }
.plus { background: linear-gradient(#556, #556) center / 5px 1px no-repeat, linear-gradient(#556, #556) center / 1px 5px no-repeat, #f5f5f5; }
.no { width: 9px; border-top: 1px dotted #aaa; }
.grp { padding-left: 21px; }
.grp .pm { margin-right: 12px; }
.groups > li { background: repeating-linear-gradient(#bbb 0 1px, transparent 1px 2px) 25px 0 / 1px 100% no-repeat; }
.groups > li:last-child { background: none; }
.leaves li { padding-left: 44px; }
.leaves li::before { content: ""; width: 14px; height: 17px; margin-right: 3px; background: linear-gradient(#bbb, #bbb) 0 9px / 14px 1px no-repeat, repeating-linear-gradient(#aaa 0 1px, transparent 1px 2px) 0 0 / 1px 17px no-repeat; }
.leaves li:last-child::before { background-size: 14px 1px, 1px 9px; }
.leaves b { background: #e0e0e0; padding: 0 2px; margin-left: -2px; line-height: 16px; }

.viewport { flex: 378; min-height: 0; display: flex; flex-direction: column; border-left: 1px solid #666; border-top: 1px solid #777; margin-right: 1px; }
.canvas { flex: 1; min-height: 0; display: flex; }
.scene { flex: 1; min-width: 0; height: 100%; }
.dim { font: 11px "Open Sans", sans-serif; fill: #234c86; }
.cube { font: 6px "Open Sans", sans-serif; fill: #555; }
.vscroll { width: 16px; display: flex; flex-direction: column; align-items: center; justify-content: space-between; padding: 6px 0 3px; background: #f0f0f0; }
.vscroll i { width: 14px; height: 16px; background: #c8c8c8; }
.viewbar { flex: none; height: 18px; display: flex; align-items: center; background: #efefef; }
.scale { width: 75px; padding-left: 23px; }
.vicons { display: flex; gap: 4px; }
.vicons svg, .end { width: 16px; height: 16px; }
.hscroll { flex: 1; height: 14px; display: flex; justify-content: center; }
.hscroll i { width: 16px; background: #c8c8c8; }
.sysbrowser { flex: 160; min-height: 0; display: flex; flex-direction: column; margin-top: 4px; }
.sysbar { flex: none; height: 33px; display: flex; align-items: center; padding: 0 17px 0 5px; border-top: 1px solid #8b96a3; }
.sysbar label { width: 38px; }
.sysbar button { margin-left: 6px; }
.grow { flex: 1; }
.combo { position: relative; display: block; }
.combo select { appearance: none; width: 100%; height: 100%; border: 1px solid #adadad; border-radius: 0; background: #e3e3e3; padding: 0 3px; }
.combo svg { position: absolute; right: 4px; top: 50%; margin-top: -3px; pointer-events: none; }
.c1 { width: 69px; height: 21px; }
.c2 { width: 98px; height: 21px; margin-left: 5px; }
.syslist { flex: 1; min-height: 0; border-left: 1px solid #666; border-top: 1px solid #666; background: #fefefe; margin-right: 2px; }
.syslist table { width: 191px; border-collapse: collapse; }
.syslist th { font-weight: normal; text-align: left; height: 20px; padding: 0 0 0 6px; border-right: 1px solid #e5e5e5; }
.syslist td { padding: 0; border-bottom: 1px solid #aaa; border-right: 1px solid #aaa; }
.sysrow { display: flex; height: 16px; align-items: center; padding-left: 8px; white-space: nowrap; }
.sysrow svg { margin: 0 6px 0 1px; }
.sysrow i { width: 9px; height: 16px; flex: none; background: repeating-linear-gradient(#aaa 0 1px, transparent 1px 2px) 0 0 / 1px 100% no-repeat, linear-gradient(#bbb, #bbb) 0 8px / 9px 1px no-repeat; }
.sysrow.last i { background-size: 1px 8px, 9px 1px; }
.sysrow .pm { height: 9px; margin-left: -4px; background: linear-gradient(#556, #556) center / 5px 1px no-repeat, linear-gradient(#556, #556) center / 1px 5px no-repeat, #f5f5f5; }
.sysrow.first svg { margin-left: 5px; }

.props .cap { padding-right: 1px; }
.propbox { flex: 1; min-height: 0; display: flex; flex-direction: column; margin-top: 1px; border-left: 1px solid #777; border-top: 1px solid #666; }
.type { flex: none; height: 68px; display: flex; align-items: center; gap: 4px; padding-left: 3px; background: #f1f1f1; line-height: 15px; }
.type > svg { margin-left: auto; }
.thumb { width: 63px; height: 61px; background: #fff; border: 1px solid #ddd; display: flex; align-items: center; }
.thumb i { flex: 1; height: 13px; background: #dedede; border: 1px solid #888; }
.filter { flex: none; height: 22px; display: flex; gap: 6px; white-space: nowrap; }
.filter button { display: flex; align-items: center; gap: 3px; }
.c3 { width: 137px; height: 21px; flex: none; }
.sheet { flex: 1; min-height: 0; display: flex; }
.sheet table { flex: 1; width: 100%; height: 100%; border-collapse: collapse; table-layout: fixed; background: #fff; line-height: 14px; }
.sheet .key { width: 99px; }
.sheet td, .sheet th { padding: 0; font-weight: normal; text-align: left; white-space: nowrap; overflow: hidden; }
.sheet td { border-bottom: 1px dotted #999; border-right: 1px dotted #888; padding-left: 2px; color: #222; }
.sheet td:first-child { padding-left: 8px; }
.sheet .ro td { color: #8a8a8a; }
.sheet .h { background: #d9d9d9; }
.sheet .h th { padding-left: 2px; color: #333; }
.h span { display: inline-block; width: 184px; vertical-align: top; }
.h svg { display: inline-block; vertical-align: middle; }
.sheet .edit { border: 1px solid #222; }
.sheet input { appearance: none; display: block; width: 12px; height: 12px; margin: 1px 0 0 1px; border: 1px solid #444; background: #fff; }
.sheet input:disabled { border-color: #ccc; }
.sheet input:checked { background: linear-gradient(45deg, transparent 43%, #333 43% 60%, transparent 60%) 1px 5px / 4px 4px no-repeat, linear-gradient(-45deg, transparent 43%, #333 43% 57%, transparent 57%) 3px 1px / 7px 8px no-repeat; }
.pscroll { flex: none; width: 13px; display: flex; flex-direction: column; align-items: center; padding: 6px 0 4px; background: #eee; }
.pscroll i { width: 10px; height: 294px; margin-bottom: auto; background: #cbcbcb; }
.foot { flex: none; height: 23px; display: flex; justify-content: space-between; align-items: center; padding-left: 2px; }
.foot a { color: #2376b8; }
.foot button { width: 67px; height: 20px; background: #cacaca; color: #929292; }

.status { flex: none; height: 14px; overflow: hidden; display: flex; align-items: flex-start; border-top: 1px solid #888; background: linear-gradient(#e6e6e6, #ccc); }
.status .msg { width: 401px; padding: 5px 0 0 2px; line-height: 14px; flex: none; white-space: nowrap; }
.status > svg { margin-top: 4px; }
.status .combo { height: 20px; margin-top: 3px; }
.status .combo select { background: #fff; border-color: #ddd; color: #888; }
.s1 { width: 194px; margin-left: 7px; }
.req { width: 48px; margin-left: 12px; padding-top: 4px; display: flex; line-height: 16px; }
.status .ex { margin: 4px 7px 0 9px; }
.s2 { width: 148px; }
.sicons { display: flex; gap: 9px; margin: 4px 50px 0 auto; line-height: 16px; }
.sicons svg { width: 16px; height: 16px; }
.sicons span { margin-left: -5px; }
```
